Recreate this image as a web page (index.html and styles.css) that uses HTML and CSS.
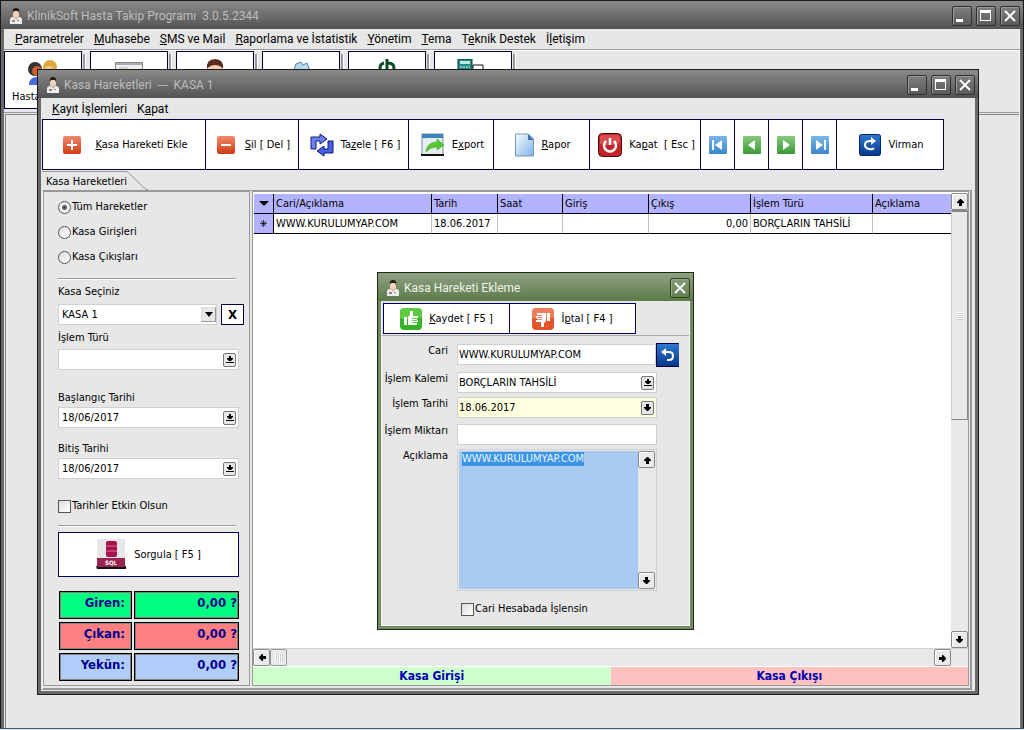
FILE: index.html
```
<!DOCTYPE html>
<html lang="tr">
<head>
    <meta charset="UTF-8">
    <meta name="viewport" content="width=device-width, initial-scale=1.0">
    <title>KlinikSoft Hasta Takip Programı</title>
    <link rel="stylesheet" href="styles.css">
</head>
<body>
    <!-- shared icons -->
    <svg class="sprite" width="0" height="0" aria-hidden="true">
        <symbol id="doctor" viewBox="0 0 14 16">
            <path d="M1 16v-4q0-3 3-3h6q3 0 3 3v4z" fill="#eee"/>
            <path d="M4 9l3 3 3-3v-2H4z" fill="#d9b9a2"/>
            <rect x="4" y="2" width="6" height="7" rx="3" fill="#f0d4c0"/>
            <path d="M4 5q-1-5 3-5t3 5l-1-2H5z" fill="#2a1a14"/>
            <path d="M3 12h3v2H3zM8 12h2v1H8z" fill="#8a8a8a"/>
        </symbol>
        <symbol id="min" viewBox="0 0 20 20"><rect x="4" y="13" width="7" height="3" fill="#fff"/></symbol>
        <symbol id="max" viewBox="0 0 20 20"><path d="M4 4h11v11H4zM5 7v7h9V7z" fill="#fff" fill-rule="evenodd"/></symbol>
        <symbol id="close" viewBox="0 0 20 20"><path d="M5 5l10 10M15 5L5 15" stroke="#fff" stroke-width="2"/></symbol>
        <symbol id="arrow" viewBox="0 0 8 8"><path d="M2 0h3v3h2v1L4 7h-1L0 4V3h2z"/></symbol>
        <symbol id="arrow-line" viewBox="0 0 8 8"><path d="M3 0h2v2h2v1L5 5H3L1 3V2h2zM0 6h8v1H0z"/></symbol>
        <linearGradient id="red" x2="0" y2="1"><stop stop-color="#f08a6c"/><stop offset="1" stop-color="#d23a12"/></linearGradient>
        <linearGradient id="blue" x2="0" y2="1"><stop stop-color="#7ab6e8"/><stop offset="1" stop-color="#3a86cc"/></linearGradient>
        <linearGradient id="green" x2="0" y2="1"><stop stop-color="#86c97c"/><stop offset="1" stop-color="#3f9a38"/></linearGradient>
        <linearGradient id="navy" x2="0" y2="1"><stop stop-color="#2f78cc"/><stop offset="1" stop-color="#06388c"/></linearGradient>
        <linearGradient id="paper" x2="1" y2="1"><stop stop-color="#fafdff"/><stop offset="1" stop-color="#7fb4e4"/></linearGradient>
    </svg>

    <div class="window main-window">
        <header class="titlebar">
            <svg class="title-icon"><use href="#doctor"/></svg>
            <h1>KlinikSoft Hasta Takip Programı&nbsp; 3.0.5.2344</h1>
            <button class="win-btn" aria-label="Küçült"><svg><use href="#min"/></svg></button>
            <button class="win-btn" aria-label="Büyüt"><svg><use href="#max"/></svg></button>
            <button class="win-btn" aria-label="Kapat"><svg><use href="#close"/></svg></button>
        </header>
        <nav class="menubar">
            <button><u>P</u>arametreler</button>
            <button><u>M</u>uhasebe</button>
            <button><u>S</u>MS ve Mail</button>
            <button><u>R</u>aporlama ve İstatistik</button>
            <button><u>Y</u>önetim</button>
            <button><u>T</u>ema</button>
            <button>T<u>e</u>knik Destek</button>
            <button>İ<u>l</u>etişim</button>
        </nav>
        <div class="main-tools">
            <button class="main-tool">
                <svg width="32" height="28" viewBox="0 0 32 28">
                    <circle cx="23" cy="8" r="7" fill="#e0a83a"/><circle cx="22" cy="11" r="4" fill="#f4c88e"/>
                    <path d="M2 26q0-8 8-8t8 8z" fill="#4a6ae0"/>
                    <circle cx="8" cy="10" r="7" fill="#333"/><circle cx="10" cy="12" r="5" fill="#d0602a"/>
                </svg>
                <span class="main-tool-text">Hasta</span>
            </button>
            <button class="main-tool" aria-label="Randevu">
                <svg width="28" height="28" viewBox="0 0 28 28">
                    <rect x=".5" y="3.500" width="27" height="20" fill="#eee" stroke="#888"/><path d="M1 4h26v2H1z" fill="#aab"/>
                    <path d="M4 9h9M4 12h9" stroke="#bbb"/><path d="M17 10h6v3h-6z" fill="#556"/>
                </svg>
            </button>
            <button class="main-tool" aria-label="Personel">
                <svg width="24" height="28" viewBox="0 0 24 28">
                    <ellipse cx="12" cy="11" rx="7" ry="9" fill="#f3cdb4"/><path d="M4 10Q3 0 12 0t8 10q-3-4-8-4-5 0-8 4z" fill="#5a2f22"/>
                </svg>
            </button>
            <button class="main-tool" aria-label="Stok">
                <svg width="24" height="28" viewBox="0 0 24 28">
                    <path d="M4 14l3-9 5-2 2 3 4-2 4 10z" fill="#b8d8f0" stroke="#4a80b0"/>
                </svg>
            </button>
            <button class="main-tool" aria-label="Muhasebe">
                <svg width="24" height="28" viewBox="0 0 24 28">
                    <path d="M12 0v18M9 4q-4 1-4 5t4 4M13 4q6 0 6 5t-5 5" fill="none" stroke="#064a28" stroke-width="3"/>
                </svg>
            </button>
            <button class="main-tool" aria-label="Rapor">
                <svg width="32" height="28" viewBox="0 0 32 28">
                    <path d="M1 0h14v20H1z" fill="#1f8a86" stroke="#043"/><path d="M3 2h10v3H3z" fill="#bfe8e0"/>
                    <path d="M3 8h10M3 11h10" stroke="#fff" stroke-dasharray="2 1"/><path d="M16 6h10v8H16z" fill="#fff" stroke="#111"/><path d="M27 12l3-2v3h-3z"/>
                </svg>
            </button>
        </div>
        <div class="workspace"></div>
    </div>

    <section class="window cash-window">
        <header class="titlebar">
            <svg class="title-icon"><use href="#doctor"/></svg>
            <h2>Kasa Hareketleri&nbsp; ---&nbsp; KASA 1</h2>
            <button class="win-btn" aria-label="Küçült"><svg><use href="#min"/></svg></button>
            <button class="win-btn" aria-label="Büyüt"><svg><use href="#max"/></svg></button>
            <button class="win-btn" aria-label="Kapat"><svg><use href="#close"/></svg></button>
        </header>
        <nav class="menubar">
            <button><u>K</u>ayıt İşlemleri</button>
            <button>K<u>a</u>pat</button>
        </nav>
        <div class="toolbar">
            <button class="tool tool-add">
                <svg width="18" height="18"><rect width="18" height="18" rx="2" fill="url(#red)"/><path d="M9 4v10M4 9h10" stroke="#fff" stroke-width="2"/></svg>
                <span><u>K</u>asa Hareketi Ekle</span>
            </button>
            <button class="tool tool-delete">
                <svg width="18" height="18"><rect width="18" height="18" rx="2" fill="url(#red)"/><path d="M4 9h10" stroke="#fff" stroke-width="2"/></svg>
                <span><u>S</u>il [ Del ]</span>
            </button>
            <button class="tool tool-refresh">
                <svg width="24" height="24" viewBox="0 0 24 24">
                    <path d="M1 4h9V1l7 5-7 5V8H6v8H1z" fill="#6f83f0" stroke="#101a70"/>
                    <path d="M23 20h-9v3l-7-5 7-5v3h4V8h5z" fill="#4560e8" stroke="#101a70"/>
                </svg>
                <span>Ta<u>z</u>ele [ F6 ]</span>
            </button>
            <button class="tool tool-export">
                <svg width="24" height="24" viewBox="0 0 24 24">
                    <rect x="1" y="1" width="21" height="21" fill="#e6eef2" stroke="#78909c"/>
                    <path d="M1 1h21v4H1z" fill="#3a86bc"/><path d="M0 21h23v2H0z" fill="#111"/>
                    <path d="M5 19q1-10 11-10V6l7 6-7 5v-3q-6 0-11 5z" fill="#58c832" stroke="#3a9a20" stroke-width=".5"/>
                </svg>
                <span>E<u>x</u>port</span>
            </button>
            <button class="tool tool-report">
                <svg width="19" height="24" viewBox="0 0 19 24"><path d="M.5 1h13l5 5v17H.5z" fill="url(#paper)" stroke="#6f9ac4"/><path d="M13 1v6h6z" fill="#4d72a8"/></svg>
                <span><u>R</u>apor</span>
            </button>
            <button class="tool tool-close">
                <svg width="24" height="24" viewBox="0 0 24 24">
                    <rect x=".5" y=".5" width="23" height="23" rx="4" fill="#c4232a" stroke="#4a0a0a"/><path d="M2 4q0-2 2-2h16q2 0 2 2v6q-10 4-20 1z" fill="#e46a6a" opacity=".6"/>
                    <path d="M8 8a6 6 0 1 0 8 0M12 5v7" fill="none" stroke="#fff" stroke-width="2.500"/>
                </svg>
                <span>Ka<u>p</u>at&nbsp; [ Esc ]</span>
            </button>
            <button class="tool tool-nav" aria-label="İlk kayıt">
                <svg width="18" height="18"><rect width="18" height="18" rx="1" fill="url(#blue)"/><path d="M13 4v10L6 9zM3 4h2v10H3z" fill="#fff"/></svg>
            </button>
            <button class="tool tool-nav" aria-label="Önceki kayıt">
                <svg width="18" height="18"><rect width="18" height="18" rx="1" fill="url(#green)"/><path d="M12 4v10L5 9z" fill="#fff"/></svg>
            </button>
            <button class="tool tool-nav" aria-label="Sonraki kayıt">
                <svg width="18" height="18"><rect width="18" height="18" rx="1" fill="url(#green)"/><path d="M6 4v10l7-5z" fill="#fff"/></svg>
            </button>
            <button class="tool tool-nav" aria-label="Son kayıt">
                <svg width="18" height="18"><rect width="18" height="18" rx="1" fill="url(#blue)"/><path d="M5 4v10l7-5zM13 4h2v10h-2z" fill="#fff"/></svg>
            </button>
            <button class="tool tool-transfer">
                <svg width="22" height="22" viewBox="0 0 22 22">
                    <rect x=".5" y=".5" width="21" height="21" rx="2" fill="url(#navy)" stroke="#04286c"/>
                    <path d="M15 14q-2 2-5 1-4-1-4-4 0-4 5-4h3" fill="none" stroke="#fff" stroke-width="2"/><path d="M12 3l5 4-5 4z" fill="#fff"/>
                </svg>
                <span>Virman</span>
            </button>
        </div>

        <div class="tab-row">
            <svg width="106" height="19" aria-hidden="true"><path d="M0 .5h85l19 18h2" fill="none" stroke="#999"/></svg>
            <span class="tab-label">Kasa Hareketleri</span>
        </div>
        <div class="panes">
            <form class="filters">
                <label class="option"><input type="radio" name="tip" checked>Tüm Hareketler</label>
                <label class="option"><input type="radio" name="tip">Kasa Girişleri</label>
                <label class="option"><input type="radio" name="tip">Kasa Çıkışları</label>
                <hr>
                <label for="kasa">Kasa Seçiniz</label>
                <div class="kasa-row">
                    <div class="field">
                        <select id="kasa"><option>KASA 1</option></select>
                        <span class="drop drop-flat"><svg width="8" height="5"><path d="M0 0h8L4 5z"/></svg></span>
                    </div>
                    <button type="button" class="clear-btn">X</button>
                </div>
                <label for="tur">İşlem Türü</label>
                <div class="field">
                    <select id="tur"><option></option></select>
                    <span class="drop"><svg><use href="#arrow-line"/></svg></span>
                </div>
                <label for="baslangic" class="date-label">Başlangıç Tarihi</label>
                <div class="field">
                    <input type="text" id="baslangic" value="18/06/2017">
                    <button type="button" class="drop" aria-label="Takvim"><svg><use href="#arrow-line"/></svg></button>
                </div>
                <label for="bitis" class="end-label">Bitiş Tarihi</label>
                <div class="field">
                    <input type="text" id="bitis" value="18/06/2017">
                    <button type="button" class="drop" aria-label="Takvim"><svg><use href="#arrow-line"/></svg></button>
                </div>
                <label class="check"><input type="checkbox">Tarihler Etkin Olsun</label>
                <hr>
                <button type="button" class="query-btn">
                    <svg width="30" height="31" viewBox="0 0 30 31">
                        <path d="M0 27h30v3H1z" fill="#111"/><rect x="1" y="0" width="28" height="28" fill="#e9e6e8"/>
                        <path d="M1 19h28v9H1z" fill="#9c2350"/>
                        <rect x="10" y="2" width="11" height="16" rx="2" fill="#a8124a"/><path d="M10 7h11M10 12h11" stroke="#e06a94"/>
                        <text x="15" y="26" class="sql-text">SQL</text>
                    </svg>
                    <span>Sorgula [ F5 ]</span>
                </button>
                <dl class="totals">
                    <dt class="total-in">Giren:</dt><dd class="total-in">0,00 ?</dd>
                    <dt class="total-out">Çıkan:</dt><dd class="total-out">0,00 ?</dd>
                    <dt class="total-sum">Yekün:</dt><dd class="total-sum">0,00 ?</dd>
                </dl>
            </form>

            <div class="grid-pane">
                <div class="grid-body">
                    <table class="records">
                        <colgroup>
                            <col class="c-mark"><col class="c-cari"><col class="c-tarih"><col class="c-saat"><col class="c-giris"><col class="c-cikis"><col class="c-tur"><col>
                        </colgroup>
                        <thead>
                            <tr>
                                <th class="mark"><svg width="10" height="5"><path d="M0 0h10L5 5z"/></svg></th>
                                <th>Cari/Açıklama</th><th>Tarih</th><th>Saat</th><th>Giriş</th><th>Çıkış</th><th>İşlem Türü</th><th>Açıklama</th>
                            </tr>
                        </thead>
                        <tbody>
                            <tr>
                                <td class="mark"><svg width="7" height="7"><path d="M3.500 0v7M0 3.500h7M1 1l5 5M6 1L1 6" stroke="#000" stroke-width=".7"/></svg></td>
                                <td>WWW.KURULUMYAP.COM</td><td>18.06.2017</td><td></td><td></td><td class="num">0,00</td><td>BORÇLARIN TAHSİLİ</td><td></td>
                            </tr>
                        </tbody>
                    </table>
                    <div class="vscroll">
                        <button class="sb-btn" aria-label="Yukarı"><svg class="up"><use href="#arrow"/></svg></button>
                        <div class="vthumb"></div>
                        <button class="sb-btn sb-end" aria-label="Aşağı"><svg><use href="#arrow"/></svg></button>
                    </div>
                </div>
                <div class="hscroll">
                    <button class="sb-btn" aria-label="Sola"><svg class="left"><use href="#arrow"/></svg></button>
                    <div class="hthumb"></div>
                    <button class="sb-btn sb-end" aria-label="Sağa"><svg class="right"><use href="#arrow"/></svg></button>
                </div>
                <div class="legend">
                    <div class="legend-in">Kasa Girişi</div>
                    <div class="legend-out">Kasa Çıkışı</div>
                </div>
            </div>
        </div>
    </section>

    <section class="window dialog" role="dialog" aria-labelledby="dialogTitle">
        <header class="titlebar">
            <svg class="title-icon"><use href="#doctor"/></svg>
            <h2 id="dialogTitle">Kasa Hareketi Ekleme</h2>
            <button class="win-btn" aria-label="Kapat"><svg><use href="#close"/></svg></button>
        </header>
        <div class="dialog-tools">
            <button class="tool">
                <svg width="22" height="22" viewBox="0 0 22 22">
                    <rect width="22" height="22" rx="4" fill="#36b428"/><path d="M0 4q0-4 4-4h14q4 0 4 4v5q-11 4-22 1z" fill="#7ada5c" opacity=".6"/>
                    <path d="M4 9h3v8H4zM8 9l2-2V3h3v5h5v2h-1v2h1v2h-1v3H8z" fill="#fff"/><path d="M12 10.500h5M12 12.500h5M12 14.500h5" stroke="#36b428" stroke-width=".7"/>
                </svg>
                <span><u>K</u>aydet [ F5 ]</span>
            </button>
            <button class="tool">
                <svg width="22" height="22" viewBox="0 0 22 22">
                    <rect width="22" height="22" rx="4" fill="#e4552c"/><path d="M0 4q0-4 4-4h14q4 0 4 4v5q-11 4-22 1z" fill="#f49a78" opacity=".6"/>
                    <path d="M15 5h3v8h-3zM14 13l-2 2v4H9v-5H4v-2h1v-2H4V8h1V5h9z" fill="#fff"/><path d="M5 7.500h5M5 9.500h5M5 11.500h5" stroke="#e4552c" stroke-width=".7"/>
                </svg>
                <span>İ<u>p</u>tal [ F4 ]</span>
            </button>
        </div>
        <form class="entry">
            <label for="cari">Cari</label>
            <div class="cari-row">
                <input type="text" id="cari" value="WWW.KURULUMYAP.COM">
                <button type="button" class="undo-btn" aria-label="Cari seç">
                    <svg width="22" height="22" viewBox="0 0 22 22"><rect width="22" height="22" fill="url(#navy)"/><path d="M7 8h5q4 0 4 4t-4 4h-2" fill="none" stroke="#fff" stroke-width="2"/><path d="M9 4v8L4 8z" fill="#fff"/></svg>
                </button>
            </div>
            <label for="kalem">İşlem Kalemi</label>
            <div class="field">
                <select id="kalem"><option>BORÇLARIN TAHSİLİ</option></select>
                <span class="drop"><svg><use href="#arrow-line"/></svg></span>
            </div>
            <label for="tarih">İşlem Tarihi</label>
            <div class="field field-active">
                <input type="text" id="tarih" value="18.06.2017">
                <button type="button" class="drop" aria-label="Takvim"><svg><use href="#arrow"/></svg></button>
            </div>
            <label for="miktar">İşlem Miktarı</label>
            <div class="field"><input type="text" id="miktar"></div>
            <label for="aciklama">Açıklama</label>
            <div class="memo">
                <textarea id="aciklama">WWW.KURULUMYAP.COM</textarea>
                <div class="vscroll">
                    <button type="button" class="sb-btn" aria-label="Yukarı"><svg class="up"><use href="#arrow"/></svg></button>
                    <button type="button" class="sb-btn sb-end" aria-label="Aşağı"><svg><use href="#arrow"/></svg></button>
                </div>
            </div>
            <label class="check"><input type="checkbox">Cari Hesabada İşlensin</label>
        </form>
    </section>

    <script>
        const memo = document.getElementById('aciklama');
        memo.focus();
        memo.select();
    </script>
</body>
</html>
```

FILE: styles.css
```
* {
    box-sizing: border-box;
}
body {
    margin: 0;
    height: 100vh;
    overflow: hidden;
    position: relative;
    background: #e7e7e7;
    color: #000;
    font: 11px/14px Tahoma, "DejaVu Sans Condensed", "DejaVu Sans", sans-serif;
}
button, input, select, textarea {
    font: inherit;
    color: inherit;
    margin: 0;
    padding: 0;
    border: 0;
    border-radius: 0;
    background: none;
    outline: 0;
}
svg {
    display: block;
    flex: none;
}
.sprite {
    position: absolute;
}

/* windows */
.window {
    position: absolute;
    display: flex;
    flex-direction: column;
    background: #e7e7e7;
    border: 1px solid #1a1a1a;
}
.main-window {
    inset: 0 0 1px 0;
    border-bottom-color: #3f566b;
    box-shadow: inset 3px 0 #6a6a6a, inset -3px 0 #6a6a6a, inset -4px 0 #fafafa;
    padding: 0 3px;
}
.cash-window {
    top: 69px;
    left: 37px;
    right: 45px;
    bottom: 35px;
    padding: 0 3px 4px;
    box-shadow: inset 0 0 0 3px #6a6a6a;
}
.dialog {
    top: 272px;
    left: 377px;
    width: 317px;
    padding: 0 4px 5px;
    border-color: #1c2a14;
    box-shadow: inset 0 0 0 3px #748a64, inset 0 0 0 4px #f4f8f0;
}
.titlebar {
    display: flex;
    align-items: center;
    gap: 4px;
    height: 28px;
    flex: none;
    margin: 0 -3px;
    padding: 1px 3px 0 8px;
    background: linear-gradient(#8a8a8a, #535353);
    color: #bdbdbd;
}
.dialog .titlebar {
    margin: 0 -4px;
    background: linear-gradient(#90a183, #5c7a48);
    color: #eef3ea;
}
.titlebar h1, .titlebar h2 {
    flex: 1;
    margin: 0;
    font: 12px/16px "Segoe UI", Roboto, "Noto Sans", sans-serif;
}
.title-icon {
    width: 14px;
    height: 16px;
}
.win-btn {
    width: 20px;
    height: 20px;
    border: 1px solid #303030;
    border-radius: 2px;
    box-shadow: inset 1px 1px #9a9a9a;
}
.win-btn svg {
    width: 20px;
    height: 20px;
    margin: -1px;
}
.dialog .win-btn {
    border-color: #2c401f;
    box-shadow: inset 1px 1px #93a884;
}
.menubar {
    display: flex;
    gap: 10px;
    height: 21px;
    flex: none;
    padding: 0 11px;
    font: 12px/20px "Segoe UI", Roboto, "Noto Sans", sans-serif;
}
.main-window .menubar {
    border-bottom: 1px solid #999;
}

/* main toolbar */
.main-tools {
    display: flex;
    gap: 8px;
    height: 63px;
    flex: none;
    margin-right: 1px;
    border-top: 1px solid #fff;
    border-bottom: 1px solid #999;
}
.main-tool {
    position: relative;
    display: flex;
    flex-direction: column;
    align-items: center;
    gap: 3px;
    width: 78px;
    height: 58px;
    padding-top: 7px;
    background: #fff;
    border: 1px solid #000040;
}
.main-tool::after {
    content: "";
    position: absolute;
    top: 2px;
    bottom: 2px;
    right: -5px;
    width: 2px;
    background: #999;
    border-right: 1px solid #fff;
}
.main-tool-text {
    align-self: flex-start;
    padding-left: 7px;
}
.workspace {
    flex: 1;
    margin: 1px 1px 0 1px;
    border: 1px solid #888;
    border-width: 1px 0 0 1px;
}

/* cash window toolbar */
.toolbar {
    display: flex;
    flex: none;
    align-self: flex-start;
    height: 51px;
    margin: 0 0 1px 1px;
    border: 1px solid #000040;
    background: #fff;
}
.tool {
    display: flex;
    align-items: center;
    justify-content: center;
    gap: 7px;
    background: #fff;
    border-right: 1px solid #000040;
}
.toolbar .tool {
    padding: 1px 0 0 3px;
}
.toolbar .tool:last-child {
    border-right: 0;
}
.tool-add {
    width: 163px;
    gap: 14px;
}
.tool-delete {
    width: 93px;
    gap: 10px;
}
.tool-refresh {
    width: 110px;
}
.tool-export {
    width: 85px;
}
.tool-report {
    width: 96px;
}
.tool-close {
    width: 111px;
}
.toolbar .tool-nav {
    width: 34px;
    padding-left: 0;
}
.tool-transfer {
    width: 106px;
}

.tab-row {
    display: flex;
    flex: none;
    height: 19px;
    margin-left: 1px;
}
.tab-label {
    margin-left: -102px;
    padding-top: 4px;
}
.panes {
    flex: 1;
    display: flex;
    gap: 2px;
    min-height: 0;
    margin: 0 3px 0 1px;
    padding: 0 1px 2px 0;
    border: 1px solid #999;
    border-right: 2px solid #999;
    border-bottom: 2px solid #999;
    border-left-color: #fff;
}

/* filter form */
.filters {
    display: flex;
    flex-direction: column;
    width: 207px;
    flex: none;
    padding: 8px 10px 0 14px;
    border: 1px solid #999;
}
.option, .check {
    display: flex;
    align-items: center;
    gap: 1px;
}
.option {
    height: 14px;
    margin-bottom: 11px;
}
.option input, .check input {
    appearance: none;
    width: 13px;
    height: 13px;
    flex: none;
    border: 1px solid #555;
    background: linear-gradient(135deg, #ddd, #fff);
}
.option input {
    border-radius: 50%;
}
.option input:checked {
    background: radial-gradient(circle, #444 0, #666 2px, #eee 3px);
}
.filters hr {
    width: 178px;
    flex: none;
    margin: 3px 0 5px;
    border: 0;
    border-top: 1px solid #999;
    border-bottom: 1px solid #fff;
}
.filters > label {
    flex: none;
}
.kasa-row {
    display: flex;
    gap: 4px;
    margin: 5px -5px 6px 0;
}
.kasa-row .field {
    flex: 1;
}
.field {
    display: grid;
    grid-template-columns: minmax(0, 1fr) 15px;
    align-items: center;
    flex: none;
    height: 21px;
    background: #fff;
    border: 1px solid #d0d0d0;
}
.field input, .field select {
    grid-area: 1 / 1 / 2 / 3;
    width: 100%;
    height: 19px;
    padding: 0 18px 0 3px;
    appearance: none;
}
.drop {
    grid-area: 1 / 2;
    display: flex;
    align-items: center;
    justify-content: center;
    width: 13px;
    height: 14px;
    border: 1px solid #777;
    border-radius: 2px;
    background: #e7e7e7;
}
span.drop {
    pointer-events: none;
}
.drop svg {
    width: 8px;
    height: 8px;
}
.drop-flat {
    width: 15px;
    height: 15px;
    border-color: #ddd #999 #999 #ddd;
    border-radius: 0;
}
.drop-flat svg {
    height: 5px;
}
.clear-btn {
    width: 23px;
    height: 21px;
    background: #fff;
    border: 1px solid #000040;
    font-size: 13px;
    font-weight: bold;
}
.filters label[for="tur"] {
    margin-bottom: 4px;
}
.date-label {
    margin: 21px 0 2px;
}
.end-label {
    margin: 14px 0 2px;
}
.filters .check {
    margin: 20px 0 9px;
}
.query-btn {
    display: flex;
    align-items: center;
    justify-content: center;
    gap: 8px;
    flex: none;
    height: 45px;
    background: #fff;
    border: 1px solid #000060;
}
.sql-text {
    font: bold 6px "DejaVu Sans Condensed", "DejaVu Sans", sans-serif;
    fill: #fff;
    text-anchor: middle;
}
.totals {
    display: grid;
    grid-template-columns: 73px 1fr;
    gap: 3px 2px;
    margin: 14px 0 0 1px;
    color: #000090;
    font-size: 13px;
    font-weight: bold;
    line-height: 16px;
    text-align: right;
}
.totals dt, .totals dd {
    height: 28px;
    margin: 0;
    padding: 3px 1px 0 0;
    border: 1px solid #000;
    box-shadow: inset 0 0 0 1px #808080;
}
.totals dt {
    padding-right: 6px;
}
.total-in {
    background: #00ff80;
}
.total-out {
    background: #ff8080;
}
.total-sum {
    background: #b0ccf8;
}

/* records grid */
.grid-pane {
    flex: 1;
    min-width: 0;
    display: flex;
    flex-direction: column;
    border: 1px solid #999;
}
.grid-body {
    flex: 1;
    display: flex;
    align-items: flex-start;
    min-height: 0;
    padding: 1px 0 0 1px;
    background: #fff;
}
.records {
    flex: 1;
    min-width: 0;
    width: 100%;
    margin-top: 1px;
    table-layout: fixed;
    border-collapse: separate;
    border-spacing: 0;
}
.records th, .records td {
    height: 20px;
    padding: 0 2px;
    border-bottom: 1px solid #000;
    font-weight: normal;
    text-align: left;
    white-space: nowrap;
}
.records th {
    background: #b3b3ff;
}
.records th + th, .records .mark + td {
    border-left: 1px solid #000;
}
.records td + td + td {
    border-left: 1px solid #c0c0c0;
}
.records .mark {
    background: #b3b3ff;
}
.records .mark svg {
    margin: 0 auto;
}
.records .num {
    text-align: right;
}
.c-mark {
    width: 19px;
}
.c-cari {
    width: 158px;
}
.c-tarih {
    width: 66px;
}
.c-saat {
    width: 65px;
}
.c-giris {
    width: 86px;
}
.c-cikis {
    width: 102px;
}
.c-tur {
    width: 122px;
}

/* scrollbars */
.vscroll {
    display: flex;
    flex-direction: column;
    align-self: stretch;
    width: 17px;
    flex: none;
    background: #e9e9e9;
}
.hscroll {
    display: flex;
    flex: none;
    height: 18px;
    padding-right: 17px;
    border-top: 1px solid #d0d0d0;
    background: #e9e9e9;
}
.sb-btn {
    display: flex;
    align-items: center;
    justify-content: center;
    width: 17px;
    height: 17px;
    flex: none;
    background: #eaeaea;
    border: 1px solid #888;
    border-radius: 2px;
    box-shadow: inset 1px 1px #fff;
}
.sb-btn svg {
    width: 8px;
    height: 8px;
}
.sb-end {
    margin-top: auto;
}
.hscroll .sb-end {
    margin: 0 0 0 auto;
}
.up {
    transform: rotate(180deg);
}
.left {
    transform: rotate(90deg);
}
.right {
    transform: rotate(-90deg);
}
.vthumb {
    height: 210px;
    border: 1px solid #888;
    border-top-width: 2px;
    border-left-color: #ccc;
    background: repeating-linear-gradient(#fff 0 1px, #ccc 1px 2px) center / 8px 8px no-repeat #e9e9e9;
}
.hthumb {
    width: 17px;
    border: 1px solid #999;
    border-radius: 2px;
    background: repeating-linear-gradient(90deg, #fff 0 1px, #ccc 1px 2px) center / 8px 8px no-repeat #e9e9e9;
}
.legend {
    display: flex;
    flex: none;
    height: 19px;
    border-top: 1px solid #fff;
    color: #0000b0;
    font-size: 12px;
    font-weight: bold;
    line-height: 18px;
    text-align: center;
}
.legend div {
    flex: 1;
}
.legend-in {
    background: #ccffcc;
}
.legend-out {
    background: #ffc0c0;
}

/* entry dialog */
.dialog-tools {
    display: flex;
    padding: 2px 0 1px 1px;
    border-bottom: 1px solid #aaa;
}
.dialog-tools .tool {
    width: 127px;
    height: 31px;
    border: 1px solid #000060;
}
.dialog-tools .tool + .tool {
    margin-left: -1px;
}
.entry {
    display: grid;
    grid-template-columns: 66px 200px;
    grid-template-rows: 28px 25px 27px 25px 142px auto;
    column-gap: 9px;
    align-items: start;
    padding: 8px 0;
}
.entry > label {
    text-align: right;
}
.cari-row {
    display: flex;
    margin-right: -22px;
}
.cari-row input {
    flex: 1;
    min-width: 0;
    height: 21px;
    padding-left: 1px;
    background: #fff;
    border: 1px solid #d0d0d0;
}
.undo-btn {
    flex: none;
    margin: -1px 0;
    border: 1px solid #000040;
    border-right: 0;
}
.entry .field input, .entry .field select {
    padding-left: 1px;
}
.field-active {
    background: #ffffe0;
}
.memo {
    display: flex;
    height: 142px;
    padding: 1px;
    border: 1px solid #d0d0d0;
}
.memo textarea {
    flex: 1;
    min-width: 0;
    padding: 1px 3px;
    resize: none;
    background: #a8caf0;
}
.memo textarea::selection {
    background: #3c94e4;
    color: #e8f6ff;
}
.entry .check {
    grid-column: 2;
    margin: 11px 0 0 4px;
}
```
